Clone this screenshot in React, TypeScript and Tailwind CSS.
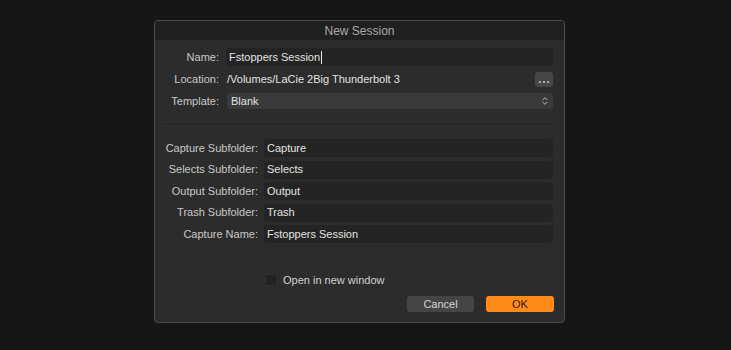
import { ChevronsUpDown } from "lucide-react";

const subfolders = [
  { label: "Capture Subfolder:", value: "Capture" },
  { label: "Selects Subfolder:", value: "Selects" },
  { label: "Output Subfolder:", value: "Output" },
  { label: "Trash Subfolder:", value: "Trash" },
  { label: "Capture Name:", value: "Fstoppers Session" },
];

function Field({ children, className = "" }: { children: React.ReactNode; className?: string }) {
  return (
    <div className={`flex-1 flex items-center h-[18px] rounded-[3px] bg-[#242424] px-[3px] text-[#e2e2e2] ${className}`}>
      {children}
    </div>
  );
}

export default function App() {
  return (
    <div
      className="w-[731px] h-[350px] bg-[#161616] pt-[20px] pl-[154px] text-[11px] leading-none"
      style={{ fontFamily: '"Liberation Sans", Arial, sans-serif' }}
    >
      <div className="w-[411px] h-[303px] rounded-[4px] border border-[#4c4c4c] bg-[#2c2c2c] overflow-hidden flex flex-col">
        {/* Title bar */}
        <div className="h-[19px] shrink-0 bg-[#202020] flex items-center justify-center text-[12px] text-[#a9a9a9]">
          New Session
        </div>

        {/* Top section */}
        <div className="flex flex-col pt-[8px] pr-[11px]">
          <div className="flex items-center h-[18px]">
            <span className="w-[64px] text-right text-[#c9c9c9]">Name:</span>
            <Field className="ml-[7px]">
              <span>Fstoppers Session</span>
              <span className="ml-px w-px h-[13px] bg-[#e8e8e8]" />
            </Field>
          </div>
          <div className="flex items-center h-[18px] mt-[4px]">
            <span className="w-[64px] text-right text-[#c9c9c9]">Location:</span>
            <span className="ml-[8px] flex-1 text-[#e2e2e2]">/Volumes/LaCie 2Big Thunderbolt 3</span>
            <div className="w-[18px] h-[15px] rounded-[3px] bg-[#474747] flex items-end justify-center pb-[4px] gap-[2px]">
              <span className="w-[2px] h-[2px] rounded-full bg-[#d0d0d0]" />
              <span className="w-[2px] h-[2px] rounded-full bg-[#d0d0d0]" />
              <span className="w-[2px] h-[2px] rounded-full bg-[#d0d0d0]" />
            </div>
          </div>
          <div className="flex items-center h-[16px] mt-[5px]">
            <span className="w-[64px] text-right text-[#c9c9c9]">Template:</span>
            <div className="ml-[8px] flex-1 h-[16px] rounded-[3px] bg-[#3a3a3a] flex items-center justify-between pl-[4px] pr-[3px] text-[#e2e2e2]">
              <span>Blank</span>
              <ChevronsUpDown className="w-[10px] h-[10px] text-[#cfcfcf]" strokeWidth={2} />
            </div>
          </div>
        </div>

        {/* Separator */}
        <div className="mt-[15px] ml-[9px] mr-[11px] h-px bg-[#222222] border-b border-[#333333] box-content" />

        {/* Subfolders */}
        <div className="flex flex-col gap-[3.5px] mt-[13px] pr-[11px]">
          {subfolders.map((s) => (
            <div key={s.label} className="flex items-center h-[18px]">
              <span className="w-[103px] text-right text-[#c9c9c9]">{s.label}</span>
              <Field className="ml-[6px]">
                <span>{s.value}</span>
              </Field>
            </div>
          ))}
        </div>

        {/* Checkbox */}
        <div className="flex items-center mt-[31px] ml-[110px]">
          <span className="w-[12px] h-[12px] rounded-[2px] bg-[#222222] border border-[#303030]" />
          <span className="ml-[6px] text-[#d2d2d2]">Open in new window</span>
        </div>

        {/* Buttons */}
        <div className="flex justify-end gap-[12px] mt-[10px] pr-[10px]">
          <button className="w-[67px] h-[16px] rounded-[3px] bg-[#454545] text-[#d6d6d6] text-[11px] leading-none">
            Cancel
          </button>
          <button className="w-[68px] h-[16px] rounded-[3px] bg-[#ff8a17] text-[#2a1a08] text-[11px] leading-none">
            OK
          </button>
        </div>
      </div>
    </div>
  );
}
